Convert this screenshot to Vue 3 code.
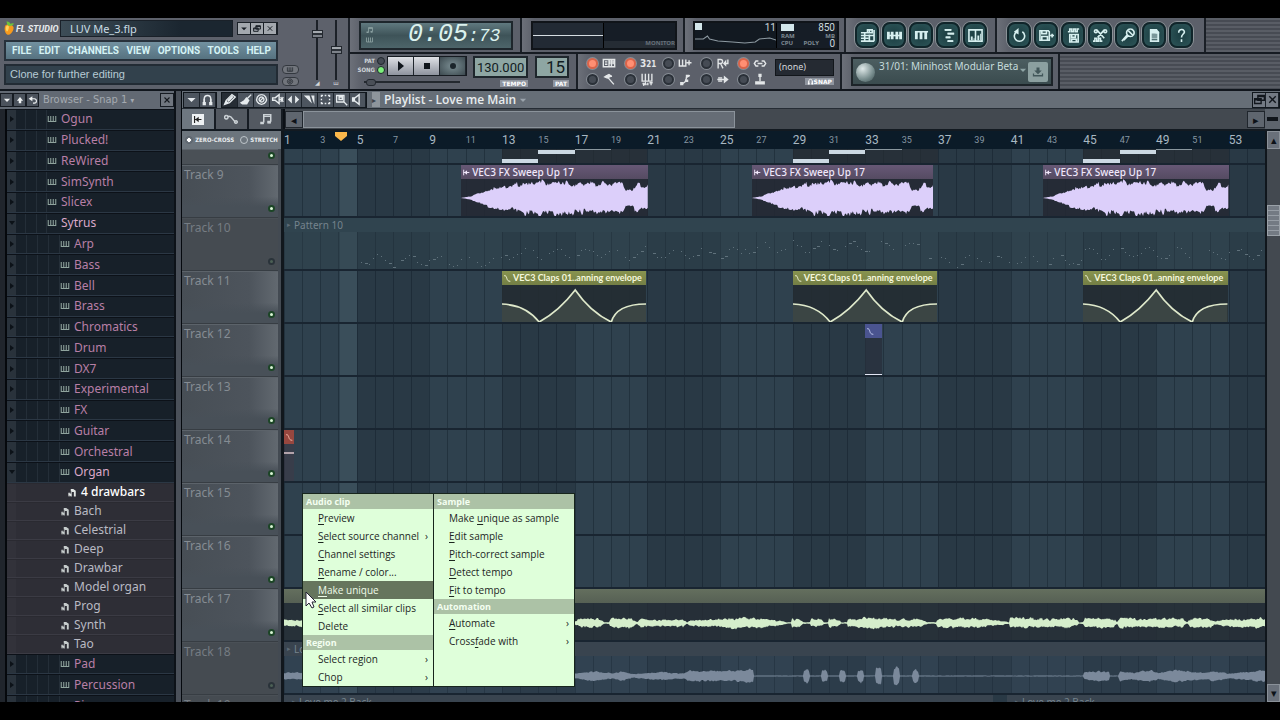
<script setup>
import { h, ref } from 'vue'

const glyphs = {
  down: ['', 'M3 6h10l-5 5z'],
  up: ['', 'M8 3l5 6h-3v4H6V9H3z'],
  back: ['M4 6h6a3 3 0 0 1 0 7H8', 'M1 6l6-4v8z'],
  close: ['M4 4l8 8M12 4l-8 8', ''],
  restore: ['M6 3h8v6h-8zM6 4.500h8M2 7h8v6H2zM2 8.500h8', ''],
  magnet: ['M4 14V7a4 4 0 0 1 8 0v7', 'M2 11h4v4H2zM10 11h4v4h-4zM3 7h2v5H3zM11 7h2v5h-2z'],
  pencil: ['M2 14l2-5 7-7 4 3-7 7z', 'M2 14l2-5 3 3zM5 9l6-6 2 2-6 6z'],
  brush: ['M15 2l-6 6', 'M9 5l4 4-3 5H4l-3-2 5-3z'],
  ban: ['M8 2a6 6 0 1 0 .1 0M8 5a3 3 0 1 0 .1 0M6 10l4-4', ''],
  mute: ['M5 6l5-4v11l-5-4H2V6zM10 8h5M12 5l3 6M15 5l-3 6', ''],
  slip: ['', 'M1 8l5-5v10zM15 8l-5-5v10z'],
  slice: ['', 'M1 3h7l3 10zM10 3h4v11z'],
  select: ['M3 5V3h2M7 3h2M11 3h2v2M13 7v2M13 11v2h-2M9 13H7M5 13H3v-2M3 9V7', ''],
  zoomer: ['M2 3h9v8H2zM5 5h4v3H5zM10 10l5 5', ''],
  speaker: ['M2 6h3l5-4v12l-5-4H2z', 'M2 6h3v4H2z'],
  curve: ['M2 4a2 2 0 1 0 .1 0M4 5c5-2 5 6 9 6M13 10a1.500 1.500 0 1 0 .1 0', ''],
  notes: ['M6 12V3h8v8M6 5h8M3 13h3M11 12h3', 'M2 11h4v3H2zM10 10h4v3h-4z'],
  playlist: ['M1 5h8M1 8h14M1 11h8M1 14h14M10 5V2M10 14V7M15 14V2M8 2h5v3H8zM5 5v9', ''],
  steps: ['M2 8h12', 'M0 4h3v8H0zM4 4h3v8H4zM9 4h3v8H9zM13 4h3v8h-3z'],
  piano: ['M1 4h14', 'M1 4h3v8H1zM6 4h3v8H6zM11 4h3v8h-3z'],
  tree: ['M4 2h7M7 6h7M5 10h5M7 14h6', 'M4 1h7v2H4zM7 5h7v2H7zM5 9h5v2H5zM7 13h6v2H7z'],
  mixer: ['M1 2h14v12H1zM8 2v12', 'M3 9h2v4H3zM6 11h1v2H6zM10 8h2v5h-2zM13 6h1v7h-1z'],
  undo: ['M5 4a5.500 5.500 0 1 0 6 0', 'M7 0v7L2 4z'],
  saveplus: ['M1 3h9l1 1v9H1zM3 3v3h5V3M3 13V9h6v4M12 8h4M14 6v4', ''],
  savewav: ['M4 7h9v8H4zM6 7v3h4V7M6 15v-3h5v3M2 4h2V1h2v3h2V1h2v3h2V1h2', ''],
  scissors: ['M4 2l8 9M12 2L5 10M3 2a1.500 1.500 0 1 0 .1 0M13 2a1.500 1.500 0 1 0 .1 0M0 14h2v-3h2v3h2v-3h2v3h2', ''],
  mic: ['M11 1a4 4 0 1 0 .1 0M8 7L2 14M9 8l-5 5M9 3l5 5', ''],
  page: ['M5 2h5v3h3', 'M3 1h7l3 3v2H3zM3 7h10v1H3zM3 9h10v1H3zM3 11h10v1H3zM3 13h10v2H3zM3 1h2v14H3zM11 5h2v10h-2z'],
  help: ['M5 5c0-5 7-4 6 0-1 2-3 2-3 5M8 12v3', ''],
  keys: ['M2 3v9h12V3M6 3v9M10 3v9', ''],
  keysdark: ['M1 3h14v9H1zM8 4v8M11 4v8M3 6h3M3 9h3', 'M8 4h2v5H8zM12 4h2v5h-2z'],
  wait: ['M2 1v9h12V1M6 1v9M10 1v9M3 12l1 3 2-3 1 3M9 12v3M11 12h4M13 12v3', ''],
  hammer: ['M3 5c4-4 8-2 8 0M7 6l7 8', 'M1 5l7-4 4 3-6 3z'],
  plus: ['M1 3v8h8V3M5 3v8M10 7h6M13 4v6', ''],
  loop: ['M3 13c5 0 6-3 7-8M9 6l5-3', 'M2 11h4v4H2zM8 8h4v3H8zM9 2h4v3H9z'],
  rback: ['M2 14V3h3a2 2 0 0 1 0 5H2M5 8l3 6M9 8h5V3', 'M12 3L8 8l4 4z'],
  arrow: ['M1 8h9M2 6h5M2 10h5', 'M9 3l6 5-6 5z'],
  link: ['M6 5H3L1 8l2 3h3M10 5h3l2 3-2 3h-3M5 8h6', ''],
  stamp: ['M8 2v8', 'M6 1h4v4H6zM2 10h12v4H2z'],
  save: ['M2 10v3h12v-3', 'M6 2h4v4h3l-5 5-5-5h3z'],
  audio: ['M3 3v10M3 8h10', 'M4 8l5-4v8z'],
  auto: ['M2 3c7-1 2 10 11 10', ''],
  preset: ['M6 10H3v2h3v2H2', 'M6 3h4l4 3v9h-3V8H8v7H7V7H6z'],
}
const Glyph = (p) => h('svg', { viewBox: '0 0 16 16', class: 'glyph', 'aria-hidden': 'true' }, [
  h('path', { d: glyphs[p.n][1], fill: 'currentColor' }),
  h('path', { d: glyphs[p.n][0], fill: 'none', stroke: 'currentColor', 'stroke-width': 1.7 }),
])
Glyph.props = ['n']

const menus = ['FILE', 'EDIT', 'CHANNELS', 'VIEW', 'OPTIONS', 'TOOLS', 'HELP']
const windowsA = ['playlist', 'steps', 'piano', 'tree', 'mixer']
const windowsB = ['undo', 'saveplus', 'savewav', 'scissors', 'mic', 'page', 'help']
const recTop = [['keysdark', true, 'Typing keyboard'], ['count', true, 'Countdown'], ['plus', false, 'Blend recording'], ['rback', false, 'Loop record'], ['link', true, 'Link editing']]
const recBottom = [['hammer', false, 'Metronome'], ['wait', false, 'Wait for input'], ['loop', false, 'Step edit'], ['arrow', false, 'Auto scroll'], ['stamp', false, 'Multilink']]
const tools = ['pencil', 'brush', 'ban', 'mute', 'slip', 'slice', 'select', 'zoomer', 'speaker']

const dir = (name, depth, open) => ({ name, depth, open, kind: 'dir' })
const file = (name, active) => ({ name, active, depth: active ? 3 : 2, kind: 'file' })
const tree = [
  dir('Ogun', 1), dir('Plucked!', 1), dir('ReWired', 1), dir('SimSynth', 1), dir('Slicex', 1), dir('Sytrus', 1, true),
  ...['Arp', 'Bass', 'Bell', 'Brass', 'Chromatics', 'Drum', 'DX7', 'Experimental', 'FX', 'Guitar', 'Orchestral'].map((n) => dir(n, 2)),
  dir('Organ', 2, true), file('4 drawbars', true),
  ...['Bach', 'Celestrial', 'Deep', 'Drawbar', 'Model organ', 'Prog', 'Synth', 'Tao'].map((n) => file(n)),
  dir('Pad', 2), dir('Percussion', 2), dir('Piano', 2),
]

const BARS = 54
const pos = (bar) => ((bar - 1) / BARS) * 100 + '%'
const span = (from, to) => ({ left: pos(from), width: ((to - from) / BARS) * 100 + '%' })
const ruler = Array.from({ length: 27 }, (_, i) => ({ bar: 1 + i * 2, major: i % 2 === 0 }))

const noise = (i, s) => { const v = Math.sin(i * 12.9898 + s * 78.233) * 43758.5453; return v - Math.floor(v) }
function wave(points, width, mid, seed, rough) {
  const amp = (x) => {
    for (let i = 1; i < points.length; i++) {
      if (x <= points[i][0]) {
        const [x0, a0] = points[i - 1], [x1, a1] = points[i]
        return a0 + ((a1 - a0) * (x - x0)) / (x1 - x0 || 1)
      }
    }
    return 0
  }
  const top = [], bottom = []
  for (let x = 0; x <= width; x += 1) {
    const a = amp(x)
    const n = (s) => (noise(x, s) + noise(Math.floor(x / 3), s + 1)) / 2
    top.push(x + ',' + (mid - a * (1 - rough * n(seed))).toFixed(1))
    bottom.unshift(x + ',' + (mid + a * (1 - rough * n(seed + 3))).toFixed(1))
  }
  return top.concat(bottom).join(' ')
}
const sweepWave = wave([[0, 0], [10, 2], [22, 8], [34, 13], [50, 14], [62, 19], [95, 20], [120, 17], [150, 18], [160, 20], [165, 10], [172, 10], [177, 19], [181, 12], [187, 14]], 187, 19, 4, 0.4)

const voice = [[0, 3], [6, 6], [25, 6], [29, 1], [34, 1], [36, 6], [56, 6], [62, 1], [66, 6], [80, 4], [108, 5], [112, 1], [116, 4], [140, 5], [152, 7], [185, 6], [205, 3], [212, 1], [216, 1], [217, 6], [225, 5], [228, 1], [235, 1], [236, 6], [247, 4], [249, 1], [253, 1], [254, 6], [265, 3], [266, 1], [272, 1], [273, 5], [295, 7], [320, 5], [345, 5], [353, 1], [361, 1], [363, 6], [405, 6], [430, 2], [434, 1], [435, 7], [478, 5], [495, 6], [502, 4], [504, 1], [508, 1], [510, 6], [538, 6], [542, 1], [545, 7], [570, 5], [585, 6], [607, 6], [612, 1], [616, 6], [635, 6], [640, 2], [648, 5], [691, 6]]
const longVoice = [[0, 4], [60, 6], [120, 4], [180, 6], [284, 5], ...voice.map(([x, a]) => [x + 291, a])]
const ghostStart = [[0, 4], [284, 5], [291, 3], [310, 6], [330, 3], [338, 6], [350, 2], [375, 5], [400, 3], [405, 6], [450, 6], [469, 8], [470, 0.5]]
const hits = [[520, 8], [538, 8], [556, 8], [574, 8], [592, 11], [610, 11], [629, 8]]
  .flatMap(([x, a]) => [[x - 1, 0.5], [x, a - 2], [x + 3, a], [x + 5, a - 2], [x + 6, 0.5]])
const ghostEnd = [[799, 0.5], [800, 4], [815, 6], [825, 5], [826, 0.5], [834, 0.5], [836, 6], [850, 4], [865, 7], [875, 4], [890, 7], [920, 4], [930, 6], [945, 3], [981, 7]]
const voiceWave = wave(longVoice, 981, 20, 2, 0.6)
const ghostWave = wave([...ghostStart, ...hits, ...ghostEnd], 981, 20, 8, 0.4)

const dots = []
for (let i = 0; i < 230; i++) {
  const x = 73 + i * 4
  if (noise(i, 1) < 0.22) continue
  const phrase = x < 218 || (x > 654 && x < 800) ? 31 : x > 460 && x < 640 ? 18 : 24
  dots.push({ x, y: Math.round(phrase - 5 + Math.sin(i * 0.85) * 5 + noise(i, 5) * 4), w: noise(i, 7) > 0.8 ? 3 : 1 })
}

const sweeps = [[10.75, 21.03], [26.77, 36.75], [42.8, 53]]
const claps = [[13, 20.95], [29, 36.95], [45, 52.95]]
const steps = [13, 29, 45]
const tracks = [9, 10, 11, 12, 13, 14, 15, 16, 17, 18, 19]
const offTracks = [10, 18, 19]

const left = [
  { head: 'Audio clip' }, { k: ['', 'P', 'review'] }, { k: ['', 'S', 'elect source channel'], sub: true }, { k: ['', 'C', 'hannel settings'] },
  { k: ['', 'R', 'ename / color...'] }, { k: ['', 'M', 'ake unique'], on: true }, { k: ['', 'S', 'elect all similar clips'] }, { k: ['Delete', '', ''] },
  { head: 'Region' }, { k: ['Select region', '', ''], sub: true }, { k: ['Chop', '', ''], sub: true },
]
const right = [
  { head: 'Sample' }, { k: ['Make ', 'u', 'nique as sample'] }, { k: ['', 'E', 'dit sample'] }, { k: ['', 'P', 'itch-correct sample'] },
  { k: ['', 'D', 'etect tempo'] }, { k: ['', 'F', 'it to tempo'] }, { head: 'Automation' }, { k: ['', 'A', 'utomate'], sub: true }, { k: ['Cross', 'f', 'ade with'], sub: true },
]
const volume = ref(80)
const pitch = ref(50)
const songPos = ref(2)
const tempo = ref('130.000')
</script>

<template>
  <div class="app">
    <header class="head">
      <section class="main-panel">
        <div class="title-row">
          <div class="logo">
            <svg viewBox="0 0 14 18" class="fruit" aria-hidden="true"><path d="M2 5c3-3 9-1 10 2s-2 9-6 10S-1 9 2 5z" fill="#f79a1c" /><path d="M3 6c2-2 4 0 3 3s-2 5-3 3-1-5 0-6z" fill="#ffd35c" /><path d="M5 5C3 3 4 1 3 0c4 0 5 2 5 3 2-1 4-1 5 0-2 2-5 4-8 2z" fill="#6cc23c" /></svg>
            <span>FL STUDIO</span>
          </div>
          <div class="file-name">LUV Me_3.flp</div>
          <div class="win-btns">
            <button aria-label="Minimize"><Glyph n="down" /></button><button aria-label="Restore"><Glyph n="restore" /></button><button aria-label="Close"><Glyph n="close" /></button>
          </div>
        </div>
        <nav class="menu-row"><button v-for="m in menus" :key="m">{{ m }}</button></nav>
        <div class="hint">Clone for further editing</div>
      </section>
      <div class="mini-leds"><button aria-label="Typing keyboard"><Glyph n="keys" /></button><button aria-label="MIDI"><Glyph n="ban" /></button></div>
      <section class="sliders">
        <label><input v-model="volume" type="range" class="vert" aria-label="Main volume" /><i class="foot">◢</i></label>
        <label><input v-model="pitch" type="range" class="vert" aria-label="Main pitch" /><i class="foot">ш</i></label>
      </section>

      <div class="panels">
        <div class="prow">
          <section class="cell time-cell">
            <div class="lcd time"><span class="tiny"><Glyph n="notes" /><Glyph n="keys" /></span><span class="big">0:05<small>:73</small></span></div>
          </section>
          <section class="cell mon-cell">
            <div class="screen monitor"><div class="scope"></div><div class="mon-side"><span>MONITOR</span></div></div>
          </section>
          <section class="cell cpu-cell">
            <div class="screen cpu">
              <div class="graph"><i class="block"></i><b>11</b><svg viewBox="0 0 78 12" preserveAspectRatio="none" aria-hidden="true"><path d="M0 4h8l4-3 2 3 8 2 14 1 12 1 10-1 4-3 10-1 6 2 10 2" fill="none" stroke="#8e9aa2" /></svg></div>
              <div class="stats"><p class="tall"><i class="block wide"></i><b>850</b></p><p><em>RAM</em><em>MB</em></p><p><em>CPU</em><em>POLY</em><b>0</b></p></div>
            </div>
          </section>
          <section class="cell round-cell"><button v-for="w in windowsA" :key="w" class="round" :aria-label="w"><Glyph :n="w" /></button></section>
          <section class="cell round-cell second"><button v-for="w in windowsB" :key="w" class="round" :aria-label="w"><Glyph :n="w" /></button></section>
          <div class="filler"></div>
        </div>
        <div class="prow lower">
          <section class="cell transport">
            <div class="trans-left">
              <div class="trans-top">
                <div class="mode"><label>PAT <input type="radio" name="mode" value="pat" /></label><label>SONG <input type="radio" name="mode" value="song" checked /></label></div>
                <div class="keys-row"><button aria-label="Play"><svg viewBox="0 0 16 16"><path d="M5 3l6 5-6 5z" /></svg></button><button aria-label="Stop"><svg viewBox="0 0 16 16"><path d="M5 5h6v6H5z" /></svg></button><button class="rec" aria-label="Record"><svg viewBox="0 0 16 16"><circle cx="8" cy="8" r="3" /></svg></button></div>
              </div>
              <input v-model="songPos" type="range" class="song-pos" aria-label="Song position" />
            </div>
            <div class="num"><input v-model="tempo" class="lcd seg tempo" aria-label="Tempo" /><span class="tag">TEMPO</span></div>
            <div class="num"><input value="15" class="lcd seg pat" aria-label="Pattern" /><span class="tag">PAT</span></div>
          </section>
          <section class="cell options">
            <div class="toggles">
              <div v-for="(row, r) in [recTop, recBottom]" :key="r" class="trow">
                <label v-for="t in row" :key="t[0]"><input type="checkbox" :checked="t[1]" :aria-label="t[2]" /><b v-if="t[0] === 'count'" class="count">3<small>21</small></b><Glyph v-else :n="t[0]" /></label>
              </div>
            </div>
            <div class="snap"><select aria-label="Snap"><option>(none)</option></select><span class="tag"><Glyph n="magnet" />SNAP</span></div>
          </section>
          <section class="cell news">
            <div class="news-box"><i class="orb"></i><span>31/01: Minihost Modular Beta</span><Glyph n="down" class="caret" /><button aria-label="Download"><Glyph n="save" /></button></div>
          </section>
          <div class="filler"></div>
        </div>
      </div>
    </header>

    <main class="work">
      <aside class="browser">
        <div class="b-title">
          <button aria-label="Options"><Glyph n="down" /></button><button aria-label="Up"><Glyph n="up" /></button><button aria-label="Back"><Glyph n="back" /></button>
          <span>Browser - Snap 1 <small>▾</small></span>
          <button class="x" aria-label="Close browser"><Glyph n="close" /></button>
        </div>
        <div class="b-body">
          <div class="gutter"></div>
          <ul class="tree">
            <li v-for="t in tree" :key="t.name" :class="[t.kind, 'd' + t.depth, { open: t.open, active: t.active }]">
              <span class="arrow"><svg v-if="t.kind === 'dir'" viewBox="0 0 6 6" aria-hidden="true"><path :d="t.open ? 'M0 1h6L3 5z' : 'M1 0v6l4-3z'" fill="#0c1218" /></svg></span>
              <span class="rails"><i></i><i></i><i></i><i v-if="t.depth > 1"></i></span>
              <button><Glyph :n="t.kind === 'dir' ? 'keys' : 'preset'" />{{ t.name }}</button>
            </li>
          </ul>
        </div>
      </aside>

      <section class="playlist">
        <div class="p-title">
          <div class="tools two"><button aria-label="Menu"><Glyph n="down" /></button><button aria-label="Snap"><Glyph n="magnet" /></button></div>
          <div class="tools"><button v-for="t in tools" :key="t" :aria-label="t"><Glyph :n="t" /></button></div>
          <i class="handle">▸</i>
          <h1>Playlist - Love me Main</h1><Glyph n="down" class="caret" />
          <div class="tools end"><button aria-label="Restore"><Glyph n="restore" /></button><button aria-label="Close"><Glyph n="close" /></button></div>
        </div>
        <div class="p-bar">
          <div class="tabs"><button class="on" aria-label="Clips"><Glyph n="audio" /></button><button aria-label="Automation"><Glyph n="curve" /></button><button aria-label="Notes"><Glyph n="notes" /></button></div>
          <div class="hscroll"><button aria-label="Scroll left">◂</button><div class="lane"><div class="thumb"></div></div><button aria-label="Scroll right">▸</button></div>
          <div class="corner"><i></i></div>
        </div>
        <div class="p-body">
          <div class="names">
            <div class="opts"><label><input type="radio" name="edit" checked />ZERO-CROSS</label><label><input type="radio" name="edit" />STRETCH</label></div>
            <div class="name stub"><button class="led" aria-label="Track 8 on"></button></div>
            <div v-for="t in tracks" :key="t" class="name" :class="{ off: offTracks.includes(t) }"><span>Track {{ t }}</span><button class="led" :aria-label="'Track ' + t + ' on'"></button></div>
          </div>
          <div class="canvas">
            <div class="ruler">
              <span v-for="r in ruler" :key="r.bar" :class="{ major: r.major }" :style="{ left: pos(r.bar) }">{{ r.bar }}</span>
              <svg class="marker" viewBox="0 0 12 9" :style="{ left: pos(4.1) }" aria-hidden="true"><path d="M0 0h12v4L6 9 0 4z" fill="#fbb84b" /></svg>
            </div>
            <div class="field">
              <div class="bars"><i v-for="b in 54" :key="b" :class="{ dark: Math.floor((b - 1) / 4) % 2 === 1 }"></i></div>
              <div class="playhead" :style="span(4.1, 5)"></div>
              <div class="lanes">
                <div class="track stub">
                  <div v-for="s in steps" :key="s" class="clip blocks" :style="span(s, s + 8)"><i></i><i></i><i></i></div>
                </div>
                <div class="track">
                  <div v-for="s in sweeps" :key="s[0]" class="clip sweep" :style="span(s[0], s[1])">
                    <div class="cap"><Glyph n="audio" />VEC3 FX Sweep Up 17</div>
                    <svg viewBox="0 0 187 38" preserveAspectRatio="none"><polygon :points="sweepWave" fill="#dccffa" /></svg>
                  </div>
                </div>
                <div class="track">
                  <div class="clip pattern" :style="span(1, 55)"><div class="cap"><small>▸</small>Pattern 10</div>
                    <svg viewBox="0 0 981 38" preserveAspectRatio="none"><rect v-for="(d, i) in dots" :key="i" :x="d.x" :y="d.y" :width="d.w" height="1" fill="#5f717b" /></svg></div>
                </div>
                <div class="track">
                  <div v-for="s in claps" :key="s[0]" class="clip clap" :style="span(s[0], s[1])">
                    <div class="cap"><Glyph n="auto" />VEC3 Claps 01..anning envelope</div>
                    <svg viewBox="0 0 144 38" preserveAspectRatio="none"><path d="M0 38V19Q24 20 37 37Q57 26 73 5Q88 27 109 37Q114 19 144 19V38z" fill="#3b4544" /><path d="M0 19Q24 20 37 37Q57 26 73 5Q88 27 109 37Q114 19 144 19" fill="none" stroke="#dfe9cb" stroke-width="1.700" /></svg>
                  </div>
                </div>
                <div class="track"><div class="clip blue" :style="span(33, 33.9)"><div class="cap"><Glyph n="auto" /></div></div></div>
                <div class="track"></div>
                <div class="track"><div class="clip red" :style="span(1, 1.55)"><div class="cap"><Glyph n="auto" /></div><i></i></div></div>
                <div class="track"></div>
                <div class="track"></div>
                <div class="track"><div class="clip voice" :style="span(1, 55)"><div class="cap"></div><svg viewBox="0 0 981 38" preserveAspectRatio="none"><polygon :points="voiceWave" fill="#d5eecb" /></svg></div></div>
                <div class="track"><div class="clip ghost" :style="span(1, 55)"><div class="cap"><small>▸</small>Lo</div><svg viewBox="0 0 981 38" preserveAspectRatio="none"><polygon :points="ghostWave" fill="#7b899b" /></svg></div></div>
                <div class="track"><div class="clip ghost inset" :style="span(1, 40)"><div class="cap"><small>▸</small>Love me 2 Back</div></div><div class="clip ghost inset" :style="span(40.8, 55)"><div class="cap"><small>▸</small>Love me 2 Back</div></div></div>
              </div>

              <div class="context" role="menu">
                <div v-for="(col, c) in [left, right]" :key="c" class="col">
                  <template v-for="(m, i) in col" :key="i">
                    <h2 v-if="m.head">{{ m.head }}</h2>
                    <button v-else role="menuitem" :class="{ on: m.on }"><span>{{ m.k[0] }}<u>{{ m.k[1] }}</u>{{ m.k[2] }}</span><i v-if="m.sub">›</i></button>
                  </template>
                </div>
                <svg class="pointer" viewBox="0 0 12 18" aria-hidden="true"><path d="M1 1v14l3-3 3 5 2-1-2-5h4z" fill="#fff" stroke="#223" /></svg>
              </div>
            </div>
          </div>
          <div class="vscroll"><button aria-label="Scroll up">▴</button><div class="vlane"><div class="vthumb"></div></div><button aria-label="Scroll down">▾</button></div>
        </div>
      </section>
    </main>
  </div>
</template>

<style>
body { margin: 0; background: #000; }
</style>

<style scoped>
* { box-sizing: border-box; margin: 0; padding: 0; }
button, input, select { font: inherit; color: inherit; border: 0; background: none; border-radius: 0; }
ul { list-style: none; }
i, em { font-style: normal; }
.app { height: 100vh; display: flex; flex-direction: column; padding: 18px 0; background: #000; font: 12px/1.2 "Noto Sans", "Open Sans", sans-serif; color: #c8d0d6; overflow: hidden; }
.glyph { width: 12px; height: 12px; display: block; flex: none; }

.head { display: flex; flex: none; height: 73px; background: #5d616b; border-bottom: 2px solid #11161d; }
.main-panel { width: 278px; padding: 2px 0 4px 4px; display: flex; flex-direction: column; gap: 3px; }
.title-row { display: flex; align-items: center; height: 18px; }
.logo { display: flex; align-items: center; gap: 1px; width: 56px; flex: none; white-space: nowrap; color: #e9ecee; font: italic bold 9px Roboto, sans-serif; }
.fruit { width: 11px; height: 17px; flex: none; }
.file-name { flex: 1; height: 17px; line-height: 16px; padding-left: 9px; font-size: 11px; color: #c9dce4; background: linear-gradient(90deg, #3d4d57, #1b2630 70%); border: 1px solid #1a2129; }
.win-btns { display: flex; margin-left: 4px; border: 1px solid #1b2128; }
.win-btns button { width: 13px; height: 11px; display: grid; place-items: center; background: #a3a8ae; color: #151b22; border-right: 1px solid #1b2128; }
.win-btns .glyph { width: 10px; height: 9px; }
.menu-row { display: flex; justify-content: space-between; align-items: center; height: 21px; padding: 0 5px 0 6px; background: linear-gradient(#7291a0, #567280); border: 2px solid #27313b; font: bold 10px Roboto, sans-serif; color: #d5f3f5; }
.hint { flex: 1; border: 2px solid #222b34; background: #32414c; color: #b7cbd4; font: 11px/17px "Liberation Sans", sans-serif; padding-left: 4px; }
.mini-leds { width: 24px; display: flex; flex-direction: column; justify-content: flex-end; align-items: center; gap: 3px; padding-bottom: 3px; }
.mini-leds button { width: 17px; height: 9px; display: grid; place-items: center; border-radius: 4px; border: 1px solid #33383f; background: #71757c; color: #23282f; }
.mini-leds .glyph { width: 10px; height: 7px; }
.sliders { width: 48px; display: flex; justify-content: center; gap: 6px; padding: 2px 0 0 3px; border-right: 2px solid #1f242c; }
.sliders label { width: 13px; display: flex; flex-direction: column; align-items: center; }
.vert { appearance: none; writing-mode: vertical-lr; direction: rtl; width: 12px; height: 60px; background: linear-gradient(90deg, transparent 5px, #1c2128 5px, #1c2128 7px, transparent 7px); }
.vert::-webkit-slider-thumb { appearance: none; width: 11px; height: 8px; background: linear-gradient(#a4a9af 40%, #2c3138 40% 60%, #7d828a 60%); border: 1px solid #23282f; }
.foot { font-size: 6px; line-height: 6px; color: #d3d7da; }

.panels { flex: 1; min-width: 0; display: flex; flex-direction: column; }
.prow { display: flex; height: 34px; }
.prow.lower { flex: 1; border-top: 2px solid #161b22; }
.cell { flex: none; border-right: 2px solid #1a1f26; display: flex; align-items: center; background: linear-gradient(90deg, #6c7079, #5c606a 12px); }
.filler { flex: 1; background: repeating-linear-gradient(#595d65 0 2px, #474b53 2px 4px); }
.lcd { background: linear-gradient(#78908f, #5d7474 50%, #6a8380); border: 2px solid #1e262c; color: #dcf2ee; }
.time-cell { width: 172px; padding: 0 7px 0 9px; }
.time { flex: 1; height: 29px; display: flex; align-items: center; background: linear-gradient(#60797f, #3e5358 50%, #4d656a); }
.tiny { color: #8ba0a1; padding-left: 4px; display: grid; gap: 2px; }
.tiny .glyph { width: 9px; height: 8px; }
.big { margin-left: 34px; font: italic 25px/24px "Liberation Mono", monospace; }
.big small { font-size: 18px; }
.mon-cell { width: 163px; padding: 0 6px 0 9px; }
.screen { flex: 1; height: 29px; background: #161d26; border: 2px solid #101419; display: flex; }
.scope { flex: 1; background: linear-gradient(#222a34 0 12px, #d6dde2 12px 13px, #222a34 13px); }
.mon-side { width: 72px; border-left: 1px solid #000; display: flex; justify-content: flex-end; align-items: flex-end; font-size: 6px; font-weight: bold; color: #67707a; background: linear-gradient(transparent 18px, #252c34 18px); }
.cpu-cell { width: 161px; padding: 0 5px 0 8px; }
.graph { width: 82px; display: grid; grid-template-columns: auto 1fr; grid-template-rows: 12px 1fr; border-right: 1px solid #000; background: #121921; }
.graph svg { grid-column: span 2; width: 100%; height: 12px; }
.graph b { justify-self: end; }
.block { width: 7px; height: 7px; background: #d3e6ea; display: block; }
.block.wide { width: 13px; }
.cpu b { font: 10px/9px Roboto, sans-serif; color: #cbd7dc; }
.stats { flex: 1; display: flex; flex-direction: column; padding: 0 2px 0 4px; }
.stats p { display: flex; justify-content: space-between; align-items: center; height: 7px; font: bold 6px/7px "Noto Sans", sans-serif; color: #7f8a93; }
.stats .tall { height: 10px; }
.round-cell { gap: 3px; padding: 0 6px 0 9px; width: 151px; }
.round-cell.second { width: 209px; padding-left: 10px; }
.round { flex: none; width: 24px; height: 26px; border-radius: 8px; background: radial-gradient(#1b3d41, #2d5558); border: 2px solid #10252a; box-shadow: 0 0 0 1px #8b9297; color: #d6efef; display: grid; place-items: center; }
.round .glyph { width: 15px; height: 15px; }

.transport { width: 228px; padding: 2px 5px 0 8px; gap: 7px; align-items: flex-start; }
.trans-left { width: 108px; }
.trans-top { display: flex; gap: 2px; }
.mode { width: 27px; font: bold 6px/9px "DejaVu Sans Condensed", sans-serif; color: #d0d5d9; text-align: right; }
.mode label { display: flex; justify-content: flex-end; align-items: center; gap: 2px; height: 9px; }
.mode input, .toggles input { appearance: none; flex: none; width: 8px; height: 8px; border-radius: 50%; background: #454b54; border: 1px solid #1f252c; }
.mode input:checked { background: #7df07c; }
.keys-row { display: flex; border: 1px solid #161b21; }
.keys-row button { width: 26px; height: 18px; background: linear-gradient(#dfe1e6, #8e939e); border-right: 1px solid #20262d; display: grid; place-items: center; fill: #10151b; }
.keys-row svg { width: 16px; height: 16px; }
.keys-row .rec { background: radial-gradient(#7a8d92, #3c494f); fill: #1b252b; }
.song-pos { display: block; appearance: none; width: 96px; height: 7px; margin: 3px 0 0 6px; background: linear-gradient(transparent 2px, #24292f 2px 4px, transparent 4px); }
.song-pos::-webkit-slider-thumb { appearance: none; width: 10px; height: 7px; background: #4a4f57; border: 1px solid #23282f; border-radius: 3px; }
.num { display: flex; flex-direction: column; align-items: flex-end; gap: 2px; }
.seg { height: 22px; text-align: right; color: #121c1f; background: #8ea6a3; font: 13px/16px Roboto, sans-serif; padding: 0 2px; }
.tempo { width: 55px; }
.pat { width: 34px; font-size: 17px; }
.tag { display: flex; align-items: center; background: #8f959f; color: #fff; font: bold 6px/7px "DejaVu Sans", sans-serif; padding: 0 2px; }
.tag .glyph { width: 7px; height: 7px; }
.options { width: 264px; padding: 0 6px 0 9px; justify-content: space-between; }
.toggles { display: flex; flex-direction: column; gap: 2px; }
.trow { display: flex; }
.trow label { width: 38px; height: 14px; display: flex; align-items: center; gap: 4px; color: #e3e6e8; }
.trow label:nth-child(4) { width: 37px; }
.trow label:nth-child(5) { width: 28px; }
.trow .glyph { width: 14px; height: 13px; }
.toggles input { width: 11px; height: 11px; border: 2px solid #2a3038; box-shadow: 0 0 0 1px #878d95; }
.toggles input:checked { background: #ff8f73; border-color: #d9644a; }
.count { font: bold 10px/11px "DejaVu Sans Condensed", sans-serif; }
.count small { font-size: 8px; }
.snap { width: 60px; display: flex; flex-direction: column; align-items: flex-end; gap: 2px; }
.snap select { width: 59px; height: 17px; appearance: none; padding-left: 3px; background: #252a32; border: 1px solid #12161b; font-size: 9px; color: #d3d6da; }
.news { width: 218px; padding: 0 6px 0 9px; }
.news-box { flex: 1; height: 29px; display: flex; align-items: flex-start; background: linear-gradient(#4c5e61, #3a4b4e); border: 2px solid #1c2328; color: #c6dcdc; font-size: 10px; line-height: 12px; padding: 1px 3px 0 3px; white-space: nowrap; }
.orb { width: 19px; height: 19px; margin: 3px 4px 0 0; border-radius: 50%; background: radial-gradient(circle at 35% 30%, #dfe9e9, #768b8c 60%, #3b4e50); }
.news-box .caret { width: 10px; height: 20px; color: #8fa5a6; }
.news-box button { margin: 2px 0 0 auto; width: 20px; height: 20px; display: grid; place-items: center; background: #8ca0a0; color: #42575a; border-radius: 2px; }

.work { flex: 1; min-height: 0; display: flex; background: #4a5059; }
.browser { width: 176px; flex: none; display: flex; flex-direction: column; border-right: 2px solid #0d1218; background: #1a2028; }
.b-title { height: 18px; flex: none; display: flex; align-items: center; background: #626973; color: #a4a9b0; font: 11px/17px "DejaVu Sans Condensed", sans-serif; }
.b-title button { width: 13px; height: 14px; display: grid; place-items: center; background: #4b525c; color: #f0f2f3; border: 1px solid #161b22; }
.b-title .glyph { width: 10px; height: 10px; }
.b-title span { padding-left: 4px; white-space: nowrap; }
.b-title small { font-size: 8px; }
.b-title .x { margin-left: auto; width: 14px; color: #15191f; background: #70767f; }
.b-body { flex: 1; min-height: 0; display: flex; overflow: hidden; }
.gutter { width: 7px; background: #20252c; border-right: 2px solid #05080c; }
.tree { flex: 1; height: calc(100% + 14px); display: flex; flex-direction: column; }
.tree li { display: flex; min-height: 0; border-bottom: 1px solid #2b3744; border-top: 1px solid #0c1118; }
.tree .dir { flex: 21 21 0; background: #172029; color: #b87fa6; }
.tree .file { flex: 19 19 0; background: #2e2e36; color: #b9bac3; border-color: #3b3b44; border-top-color: #2a2a31; }
.tree .dir.open { color: #dba9c8; }
.tree .active { color: #fff; font-weight: 500; }
.arrow { width: 9px; background: #29323b; display: grid; place-items: center; }
.arrow svg { width: 6px; height: 6px; }
.file .arrow { background: #32323a; }
.rails { display: flex; width: 31px; }
.d2 .rails { width: 44px; }
.d3 .rails { width: 51px; }
.rails i { flex: 1; border-right: 1px solid #242e38; }
.file .rails i { border: 0; }
.tree button { display: flex; align-items: center; gap: 4px; white-space: nowrap; min-height: 0; text-align: left; line-height: 16px; }
.tree .glyph { width: 10px; height: 10px; color: #8fa39d; }
.file .glyph { color: #c6cccc; }
.tree .active .glyph { color: #e3e7e5; }

.playlist { flex: 1; min-width: 0; display: flex; flex-direction: column; margin-left: 5px; border-left: 1px solid #05090e; background: #434a52; }
.p-title { flex: none; height: 18px; display: flex; align-items: center; background: #666e77; border-bottom: 1px solid #252c34; color: #e8ecee; }
.tools { display: flex; border: 1px solid #11171d; }
.tools.two { margin: 0 4px 0 1px; }
.tools button { width: 16px; height: 14px; display: grid; place-items: center; background: #4d555f; color: #e6ebee; border-right: 1px solid #1c232b; }
.tools:not(.two):not(.end) button:first-child { background: #262d35; }
.tools .glyph { width: 13px; height: 13px; }
.handle { width: 8px; height: 15px; margin: 0 4px 0 5px; background: #8e959c; color: #3c434b; font-size: 8px; line-height: 15px; }
.p-title h1 { font: 600 12px/17px "Open Sans", sans-serif; }
.p-title .caret { width: 10px; margin-left: 2px; color: #9aa3ab; }
.tools.end { margin-left: auto; }
.tools.end button { background: #737a84; color: #12171d; width: 13px; }
.p-bar { flex: none; height: 22px; display: flex; background: #434950; border-bottom: 2px solid #131a21; }
.tabs { width: 103px; display: flex; border-right: 2px solid #0b1016; }
.tabs button { flex: 1; display: grid; place-items: center; background: #535961; border-right: 2px solid #161c23; color: #ccd2d6; }
.tabs button .glyph { width: 15px; height: 14px; }
.tabs .on { background: #6e7780; }
.tabs button.on .glyph { background: #eef2f4; color: #222; width: 12px; height: 11px; }
.hscroll { flex: 1; display: flex; padding: 2px 0 1px; }
.hscroll button { width: 18px; background: #5f666f; color: #0d1218; border: 1px solid #20262d; font-size: 11px; }
.hscroll .lane { flex: 1; }
.thumb { width: 45.8%; height: 100%; background: #666d76; border: 1px solid #8b939b; }
.corner { width: 15px; background: #5d646d; padding: 8px 2px; }
.corner i { display: block; height: 4px; background: #10151b; }
.p-body { flex: 1; min-height: 0; display: flex; overflow: hidden; }
.names { width: 102px; flex: none; border-right: 3px solid #11171d; }
.opts { height: 18px; display: flex; align-items: center; justify-content: space-around; background: #6c757d; color: #e6eaec; font: bold 6px/8px "DejaVu Sans Condensed", sans-serif; }
.opts label { display: flex; align-items: center; gap: 2px; }
.opts input { appearance: none; width: 8px; height: 8px; border: 1px solid #bfc6cb; border-radius: 50%; }
.opts input:checked { background: radial-gradient(#fff 2px, transparent 2px); border-color: #59616a; }
.name { position: relative; height: 53px; margin-right: 3px; padding: 2px 2px 0; border-top: 1px solid #5c636a; border-bottom: 1px solid #373d43; background: linear-gradient(transparent 60%, #485058 80%), linear-gradient(90deg, #474e55, #4d545c 70%, #626970); color: #858c93; }
.name.off { background: #454b51; border-top-color: #4a5056; color: #757c83; }
.name.stub { height: 16px; background: #4a5056; }
.led { position: absolute; right: 3px; bottom: 5px; width: 7px; height: 7px; border-radius: 50%; border: 2px solid #1c4526; background: #d8f5d4; }
.off .led { background: #4c6055; border-color: #2a333a; }
.canvas { flex: 1; min-width: 0; display: flex; flex-direction: column; }
.ruler { position: relative; height: 18px; flex: none; background: #0b1b28; overflow: hidden; }
.ruler span { position: absolute; top: 4px; font: 9px/11px Roboto, sans-serif; color: #8797a3; }
.ruler .major { top: 3px; font-size: 12px; line-height: 12px; color: #a8b8c2; }
.marker { position: absolute; top: 1px; width: 12px; height: 9px; margin-left: -5px; }
.field { position: relative; flex: 1; min-height: 0; }
.bars, .lanes { position: absolute; inset: 0; overflow: hidden; }
.bars { display: grid; grid-template-columns: repeat(54, 1fr); }
.bars i { background: #2f414e; border-left: 1px solid #22323e; }
.bars .dark { background: #293945; border-left-color: #1e2c38; }
.playhead { position: absolute; top: 0; bottom: 0; background: rgba(140, 170, 180, 0.12); }
.track { position: relative; height: 53px; border-bottom: 2px solid #192531; }
.track.stub { height: 16px; }
.clip { position: absolute; top: 0; height: 51px; overflow: hidden; background: rgba(35, 40, 50, 0.85); }
.clip svg:not(.glyph) { display: block; width: 100%; height: 38px; }
.cap { height: 14px; display: flex; align-items: center; gap: 1px; padding-left: 1px; white-space: nowrap; overflow: hidden; font: 10px/14px "Noto Sans", sans-serif; }
.cap .glyph { width: 9px; height: 9px; }
.sweep .cap { background: linear-gradient(#675876, #554b62); color: #f0e8fb; font-weight: 500; }
.clap { background: rgba(36, 44, 50, 0.9); }
.clap .cap { background: linear-gradient(#88944f, #747f45); color: #f5f8dd; font: bold 9px/14px Lato, sans-serif; }
.pattern { background: rgba(48, 70, 78, 0.35); }
.pattern .cap, .ghost .cap { color: #75838d; gap: 3px; padding-left: 3px; }
.cap small { font-size: 7px; color: #5c6a75; }
.pattern .cap { background: #30444f; }
.ghost { background: rgba(56, 72, 90, 0.25); }
.ghost .cap { background: #39444f; }
.ghost.inset .cap { padding-left: 8px; }
.blocks { height: 14px; background: rgba(36, 42, 48, 0.7); }
.blocks i { position: absolute; width: 25%; height: 4px; background: #ccd9e3; top: 10px; left: 0; }
.blocks i:nth-child(2) { left: 25%; top: 1px; }
.blocks i:nth-child(3) { left: 50%; top: 0; height: 1px; background: #8b989f; }
.blue { border-bottom: 1px solid #e2e6f4; background: rgba(38, 46, 58, 0.7); }
.blue .cap { background: #4a5490; color: #c3ccf0; }
.red { background: rgba(70, 55, 70, 0.4); }
.red .cap { background: #97473f; color: #f2b4a4; }
.red i { display: block; height: 2px; margin-top: 8px; background: #b3a3ab; }
.voice { background: rgba(37, 45, 53, 0.8); }
.voice .cap { background: linear-gradient(#646f5e, #566054); }

.context { position: absolute; left: 18px; top: 344px; display: flex; border: 1px solid #17251c; background: #dfffda; color: #1d261f; }
.col { width: 130px; }
.col + .col { width: 141px; border-left: 1px solid #17251c; }
.col h2 { height: 15px; padding-left: 3px; background: #acc2a6; color: #f4fff1; font: bold 9px/15px "Open Sans", sans-serif; }
.col button { display: flex; justify-content: space-between; width: 100%; height: 18px; padding: 0 5px 0 15px; white-space: nowrap; text-align: left; font: 10px/18px "Open Sans", sans-serif; }
.col button u { text-underline-offset: 2px; }
.col .on { background: #66755d; color: #effbe9; }
.pointer { position: absolute; left: 2px; top: 97px; width: 12px; height: 18px; }
.vscroll { width: 15px; flex: none; display: flex; flex-direction: column; border-left: 2px solid #10161c; background: #434950; }
.vscroll button { height: 18px; background: #69707a; color: #0d1218; border: 1px solid #8a9199; font-size: 11px; line-height: 12px; }
.vlane { flex: 1; display: flex; flex-direction: column; }
.vlane::before { content: ''; flex: 56; }
.vlane::after { content: ''; flex: 450; }
.vthumb { height: 31px; border: 1px solid #9aa1a8; background: repeating-linear-gradient(#737a83 0 4px, #969da5 4px 5px); }
</style>
